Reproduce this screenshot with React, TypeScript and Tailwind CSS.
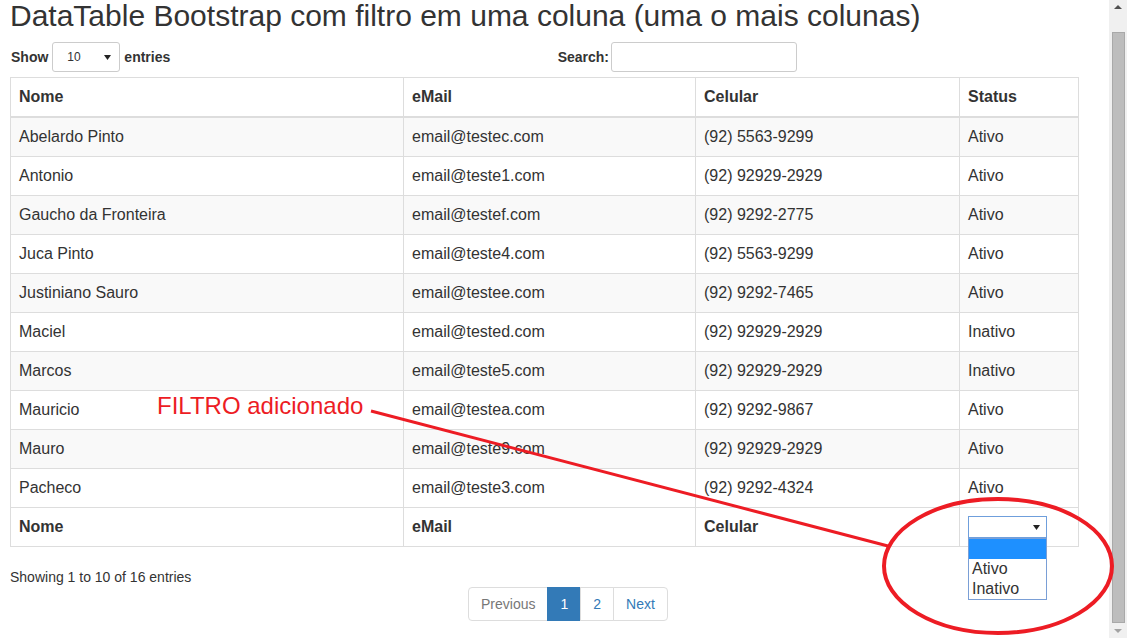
import React from 'react';

type Row = [string, string, string, string];

const rows: Row[] = [
  ['Abelardo Pinto', 'email@testec.com', '(92) 5563-9299', 'Ativo'],
  ['Antonio', 'email@teste1.com', '(92) 92929-2929', 'Ativo'],
  ['Gaucho da Fronteira', 'email@testef.com', '(92) 9292-2775', 'Ativo'],
  ['Juca Pinto', 'email@teste4.com', '(92) 5563-9299', 'Ativo'],
  ['Justiniano Sauro', 'email@testee.com', '(92) 9292-7465', 'Ativo'],
  ['Maciel', 'email@tested.com', '(92) 92929-2929', 'Inativo'],
  ['Marcos', 'email@teste5.com', '(92) 92929-2929', 'Inativo'],
  ['Mauricio', 'email@testea.com', '(92) 9292-9867', 'Ativo'],
  ['Mauro', 'email@teste9.com', '(92) 92929-2929', 'Ativo'],
  ['Pacheco', 'email@teste3.com', '(92) 9292-4324', 'Ativo'],
];

const cell = 'border border-[#ddd] px-2 py-2 leading-[22px] text-left align-top';

function Caret({ className }: { className?: string }) {
  return (
    <svg width="7" height="5" viewBox="0 0 7 5" className={className}>
      <path d="M0 0 L7 0 L3.5 5 Z" fill="#222" />
    </svg>
  );
}

function StatusFilter() {
  return (
    <div className="relative w-[79px] h-[22px]">
      <div className="w-full h-full border border-[#6f9fdc] bg-white flex items-center justify-end pr-[6px]">
        <Caret />
      </div>
      <ul className="absolute left-0 top-[22px] w-[79px] border border-[#7a9fd6] bg-white font-normal text-[16px] text-[#333] leading-[20px]">
        <li className="h-[20px] bg-[#1e90ff]" />
        <li className="h-[20px] pl-[3px]">Ativo</li>
        <li className="h-[20px] pl-[3px]">Inativo</li>
      </ul>
    </div>
  );
}

function Scrollbar() {
  return (
    <div className="w-[18px] h-[638px] bg-[#f0f0f0] flex flex-col items-center shrink-0">
      <svg width="8" height="4" viewBox="0 0 8 4" className="mt-[5px]">
        <path d="M0 4 L8 4 L4 0 Z" fill="#505050" />
      </svg>
      <div className="mt-[23px] w-[13px] h-[591px] bg-[#bdbdbd] border border-[#a9a9a9]" />
      <svg width="8" height="4" viewBox="0 0 8 4" className="mt-[6px]">
        <path d="M0 0 L8 0 L4 4 Z" fill="#a3a3a3" />
      </svg>
    </div>
  );
}

function Annotation() {
  return (
    <div className="absolute inset-0 pointer-events-none">
      <svg width="1128" height="638" viewBox="0 0 1128 638" className="absolute inset-0">
        <line x1="371" y1="411" x2="888" y2="546" stroke="#ed1c24" strokeWidth="3" />
        <ellipse cx="998" cy="566" rx="114" ry="67" fill="none" stroke="#ed1c24" strokeWidth="4" />
      </svg>
      <span className="absolute left-[157px] top-[392px] text-[24px] leading-[28px] text-[#ed1c24]">
        FILTRO adicionado
      </span>
    </div>
  );
}

export default function App() {
  return (
    <div className="relative w-[1128px] h-[638px] overflow-hidden bg-white flex font-['Liberation_Sans',Arial,sans-serif] text-[#333]">
      <main className="w-[1109px] pl-[10px] shrink-0">
        <h1 className="-mt-px text-[30px] leading-[33px] font-normal">
          DataTable Bootstrap com filtro em uma coluna (uma o mais colunas)
        </h1>

        <div className="mt-[10px] w-[787px] flex items-center justify-between text-[14px] font-bold">
          <div className="flex items-center">
            <span className="pl-px">Show</span>
            <div className="mx-[4px] w-[68px] h-[30px] border border-[#ccc] rounded-[3px] bg-white flex items-center pl-[14px] pr-[8px] font-normal text-[12px]">
              <span className="flex-1">10</span>
              <Caret />
            </div>
            <span>entries</span>
          </div>
          <div className="flex items-center">
            <span>Search:</span>
            <div className="ml-[2px] w-[186px] h-[30px] border border-[#ccc] rounded-[3px] bg-white" />
          </div>
        </div>

        <table className="mt-[5px] w-[1068px] table-fixed border-collapse text-[16px]">
          <colgroup>
            <col className="w-[393px]" />
            <col className="w-[292px]" />
            <col className="w-[264px]" />
            <col className="w-[119px]" />
          </colgroup>
          <thead>
            <tr>
              <th className={`${cell} border-b-2 font-bold`}>Nome</th>
              <th className={`${cell} border-b-2 font-bold`}>eMail</th>
              <th className={`${cell} border-b-2 font-bold`}>Celular</th>
              <th className={`${cell} border-b-2 font-bold`}>Status</th>
            </tr>
          </thead>
          <tbody>
            {rows.map((r, i) => (
              <tr key={r[0]} className={i % 2 === 0 ? 'bg-[#f9f9f9]' : 'bg-white'}>
                {r.map((v, j) => (
                  <td key={j} className={cell}>
                    {v}
                  </td>
                ))}
              </tr>
            ))}
          </tbody>
          <tfoot>
            <tr>
              <th className={`${cell} font-bold`}>Nome</th>
              <th className={`${cell} font-bold`}>eMail</th>
              <th className={`${cell} font-bold`}>Celular</th>
              <th className={`${cell} font-bold`}>
                <StatusFilter />
              </th>
            </tr>
          </tfoot>
        </table>

        <div className="mt-[20px] text-[14px] leading-[20px]">Showing 1 to 10 of 16 entries</div>

        <ul className="ml-[458px] flex text-[14px] leading-[20px]">
          <li className="px-3 py-[6px] border border-[#ddd] rounded-l-[4px] text-[#777] bg-white">Previous</li>
          <li className="px-3 py-[6px] border border-[#337ab7] bg-[#337ab7] text-white -ml-px">1</li>
          <li className="px-3 py-[6px] border border-[#ddd] text-[#337ab7] bg-white -ml-px">2</li>
          <li className="px-3 py-[6px] border border-[#ddd] rounded-r-[4px] text-[#337ab7] bg-white -ml-px">Next</li>
        </ul>
      </main>
      <Scrollbar />
      <Annotation />
    </div>
  );
}
